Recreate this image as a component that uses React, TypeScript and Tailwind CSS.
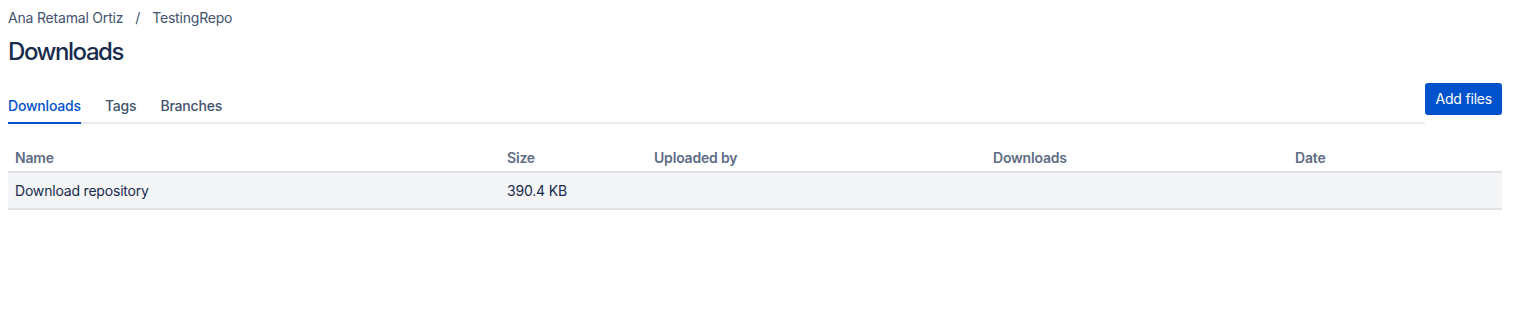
export default function App() {
  const cols = [
    { label: "Name", w: "w-[492px]" },
    { label: "Size", w: "w-[147px]" },
    { label: "Uploaded by", w: "w-[339px]" },
    { label: "Downloads", w: "w-[302px]" },
    { label: "Date", w: "" },
  ];

  return (
    <div className="min-h-[314px] bg-white font-['Inter','Liberation_Sans',sans-serif] tracking-[-0.012em] text-[#172B4D]">
      <div className="pl-[8px] pr-[11px] pt-[8px]">
        <nav className="flex items-center text-[14px] leading-[20px] text-[#42526E]">
          <span>Ana Retamal Ortiz</span>
          <span className="px-[12px]">/</span>
          <span>TestingRepo</span>
        </nav>

        <h1 className="mt-[10px] text-[24px] font-medium leading-[28px] tracking-[-0.06em] text-[#172B4D]">
          Downloads
        </h1>

        <div className="mt-[17px] flex items-end justify-between">
          <div className="flex flex-1 gap-[24px] border-b-2 border-[#EBECF0]">
            <a className="-mb-[2px] border-b-2 border-[#0052CC] pb-[6px] text-[14px] font-medium leading-[20px] text-[#0052CC]">
              Downloads
            </a>
            <a className="pb-[6px] text-[14px] font-medium leading-[20px] text-[#42526E]">Tags</a>
            <a className="pb-[6px] text-[14px] font-medium leading-[20px] text-[#42526E]">Branches</a>
          </div>
          <button className="mb-[9px] h-[32px] shrink-0 rounded-[3px] bg-[#0052CC] px-[10px] text-[14px] leading-[32px] text-white">
            Add files
          </button>
        </div>

        <table className="mt-[24px] w-full border-collapse text-[14px]">
          <thead>
            <tr className="border-b-2 border-[#DFE1E6]">
              {cols.map((c) => (
                <th
                  key={c.label}
                  className={`${c.w} px-[7px] pb-[3px] text-left text-[14px] font-semibold leading-[20px] text-[#5E6C84]`}
                >
                  {c.label}
                </th>
              ))}
            </tr>
          </thead>
          <tbody>
            <tr className="border-b-2 border-[#DFE1E6] bg-[#F4F5F7]">
              <td className="h-[37px] px-[7px] leading-[20px] text-[#172B4D]">Download repository</td>
              <td className="px-[7px] leading-[20px] text-[#172B4D]">390.4 KB</td>
              <td className="px-[7px]"></td>
              <td className="px-[7px]"></td>
              <td className="px-[7px]"></td>
            </tr>
          </tbody>
        </table>
      </div>
    </div>
  );
}
